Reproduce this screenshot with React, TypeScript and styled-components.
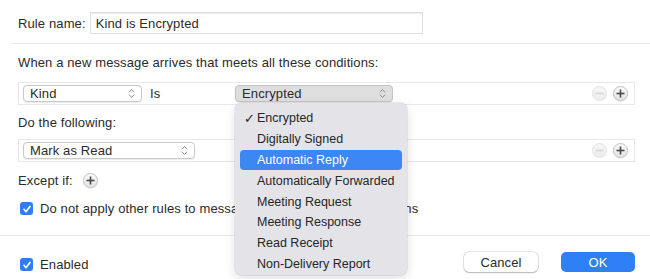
import React from "react";
import styled, { createGlobalStyle, css } from "styled-components";

const Global = createGlobalStyle`
  html, body { margin: 0; padding: 0; background: #ffffff; }
  body {
    font-family: "Liberation Sans", Arial, Helvetica, sans-serif;
    font-size: 13px;
    letter-spacing: 0.12px;
    color: #2b2b2b;
    width: 650px;
    height: 279px;
    overflow: hidden;
  }
`;

const Page = styled.div`
  position: relative;
  width: 650px;
  height: 279px;
  display: flex;
  flex-direction: column;
`;

const NameRow = styled.div`
  display: flex;
  align-items: center;
  gap: 4px;
  padding: 12px 0 0 18px;
`;

const Label = styled.span`
  line-height: 15px;
  white-space: nowrap;
`;

const TextField = styled.div`
  box-sizing: border-box;
  width: 333px;
  height: 22px;
  border: 1px solid #dedede;
  box-shadow: inset 0 1px 0 #ececec;
  display: flex;
  align-items: center;
  padding-left: 5px;
`;

const Divider = styled.div<{ $inset?: number; $top: number }>`
  height: 1px;
  background: #e9e9e9;
  margin-left: ${(p) => p.$inset ?? 0}px;
  margin-top: ${(p) => p.$top}px;
`;

const SectionLabel = styled.div<{ $top: number }>`
  line-height: 15px;
  padding-left: 18px;
  margin-top: ${(p) => p.$top}px;
`;

const RuleBox = styled.div<{ $top: number }>`
  box-sizing: border-box;
  height: 23px;
  margin: ${(p) => p.$top}px 15px 0 18px;
  border: 1px solid #e8e8e8;
  display: flex;
  align-items: center;
  padding: 0 6px 0 4px;
`;

const PopupWrap = styled.div`
  position: relative;
`;

const Popup = styled.div<{ $width: number; $pressed?: boolean }>`
  box-sizing: border-box;
  width: ${(p) => p.$width}px;
  height: 17px;
  border: 1px solid #c9c9c9;
  border-radius: 4px;
  background: #ffffff;
  display: flex;
  align-items: center;
  justify-content: space-between;
  padding: 0 6px 0 6px;
  line-height: 15px;
  box-shadow: 0 0.5px 1px rgba(0, 0, 0, 0.08);
  ${(p) =>
    p.$pressed &&
    css`
      background: #dedede;
      border-color: #c4c4c4;
    `}
`;

const Chevrons = () => (
  <svg width="7" height="11" viewBox="0 0 7 11" fill="none">
    <path d="M1.2 4 L3.5 1.5 L5.8 4" stroke="#8f8f8f" strokeWidth="1" strokeLinecap="round" strokeLinejoin="round" />
    <path d="M1.2 7 L3.5 9.5 L5.8 7" stroke="#8f8f8f" strokeWidth="1" strokeLinecap="round" strokeLinejoin="round" />
  </svg>
);

const OpLabel = styled.span`
  width: 93px;
  padding-left: 8px;
  box-sizing: border-box;
  line-height: 15px;
`;

const RoundButtons = styled.div`
  margin-left: auto;
  display: flex;
  gap: 6px;
  align-items: center;
`;

const RoundBtn = styled.div<{ $disabled?: boolean }>`
  width: 15px;
  height: 15px;
  border-radius: 50%;
  box-sizing: border-box;
  display: flex;
  align-items: center;
  justify-content: center;
  background: ${(p) =>
    p.$disabled
      ? "linear-gradient(#f7f7f7, #ececec)"
      : "linear-gradient(#fafafa, #e4e4e4)"};
  border: 1px solid ${(p) => (p.$disabled ? "#e2e2e2" : "#c2c2c2")};
  box-shadow: ${(p) => (p.$disabled ? "none" : "0 0.5px 1px rgba(0,0,0,0.15)")};
`;

const Glyph = ({ plus, color }: { plus?: boolean; color: string }) => (
  <svg width="9" height="9" viewBox="0 0 9 9">
    <rect x="0.5" y="3.7" width="8" height="1.6" fill={color} />
    {plus && <rect x="3.7" y="0.5" width="1.6" height="8" fill={color} />}
  </svg>
);

const ExceptRow = styled.div`
  display: flex;
  align-items: center;
  gap: 10px;
  padding-left: 18px;
  margin-top: 11px;
  height: 15px;
`;

const CheckRow = styled.div<{ $top: number }>`
  display: flex;
  align-items: center;
  gap: 7px;
  padding-left: 20px;
  margin-top: ${(p) => p.$top}px;
  height: 15px;
`;

const CheckBoxBox = styled.div`
  width: 13px;
  height: 13px;
  border-radius: 3px;
  background: #2f7cf6;
  display: flex;
  align-items: center;
  justify-content: center;
`;

const Checkbox = () => (
  <CheckBoxBox>
    <svg width="10" height="10" viewBox="0 0 10 10" fill="none">
      <path d="M2 5.3 L4.1 7.6 L8 2.4" stroke="#fff" strokeWidth="1.7" strokeLinecap="round" strokeLinejoin="round" />
    </svg>
  </CheckBoxBox>
);

const Footer = styled.div`
  display: flex;
  align-items: flex-end;
  padding: 0 15px 0 0;
  margin-top: 16px;
`;

const Buttons = styled.div`
  margin-left: auto;
  display: flex;
  gap: 23px;
`;

const Button = styled.div<{ $primary?: boolean }>`
  box-sizing: border-box;
  width: 74px;
  height: 20px;
  border-radius: 5px;
  display: flex;
  align-items: center;
  justify-content: center;
  font-size: 13px;
  ${(p) =>
    p.$primary
      ? css`
          background: #2f80f7;
          color: #ffffff;
        `
      : css`
          background: #ffffff;
          color: #2b2b2b;
          box-shadow: 0 0 0 0.5px rgba(0, 0, 0, 0.2), 0 1px 1.5px rgba(0, 0, 0, 0.2);
        `}
`;

const Menu = styled.div`
  position: absolute;
  left: 0;
  top: 18px;
  width: 172px;
  box-sizing: border-box;
  padding: 5px 5px 1px;
  background: #e3e3e8;
  border-radius: 6px;
  font-size: 12.5px;
  letter-spacing: 0;
  box-shadow: 0 0 0 0.5px rgba(0, 0, 0, 0.12), 0 4px 12px rgba(0, 0, 0, 0.12);
  z-index: 10;
`;

const MenuItem = styled.div<{ $active?: boolean }>`
  height: 20.8px;
  display: flex;
  align-items: center;
  border-radius: 4px;
  padding-left: 4px;
  color: ${(p) => (p.$active ? "#ffffff" : "#262626")};
  background: ${(p) => (p.$active ? "#3c87f4" : "transparent")};
`;

const Check = styled.span`
  width: 13px;
  display: inline-block;
`;

const items = [
  "Encrypted",
  "Digitally Signed",
  "Automatic Reply",
  "Automatically Forwarded",
  "Meeting Request",
  "Meeting Response",
  "Read Receipt",
  "Non-Delivery Report",
];

const RowControls = () => (
  <RoundButtons>
    <RoundBtn $disabled>
      <Glyph color="#d6d6d6" />
    </RoundBtn>
    <RoundBtn>
      <Glyph plus color="#4a4a4a" />
    </RoundBtn>
  </RoundButtons>
);

export default function App() {
  return (
    <>
      <Global />
      <Page>
        <NameRow>
          <Label>Rule name:</Label>
          <TextField>Kind is Encrypted</TextField>
        </NameRow>
        <Divider $inset={10} $top={9} />
        <SectionLabel $top={11}>When a new message arrives that meets all these conditions:</SectionLabel>
        <RuleBox $top={12}>
          <Popup $width={119}>
            <span>Kind</span>
            <Chevrons />
          </Popup>
          <OpLabel>Is</OpLabel>
          <PopupWrap>
            <Popup $width={158} $pressed>
              <span>Encrypted</span>
              <Chevrons />
            </Popup>
            <Menu>
              {items.map((it, i) => (
                <MenuItem key={it} $active={i === 2}>
                  <Check>{i === 0 ? "✓" : ""}</Check>
                  {it}
                </MenuItem>
              ))}
            </Menu>
          </PopupWrap>
          <RowControls />
        </RuleBox>
        <SectionLabel $top={10}>Do the following:</SectionLabel>
        <RuleBox $top={9}>
          <Popup $width={172}>
            <span>Mark as Read</span>
            <Chevrons />
          </Popup>
          <RowControls />
        </RuleBox>
        <ExceptRow>
          <Label>Except if:</Label>
          <RoundBtn>
            <Glyph plus color="#4a4a4a" />
          </RoundBtn>
        </ExceptRow>
        <CheckRow $top={13}>
          <Checkbox />
          <Label>Do not apply other rules to messages that meet these conditions</Label>
        </CheckRow>
        <Divider $top={19} />
        <Footer>
          <CheckRow $top={0}>
            <Checkbox />
            <Label>Enabled</Label>
          </CheckRow>
          <Buttons>
            <Button>Cancel</Button>
            <Button $primary>OK</Button>
          </Buttons>
        </Footer>
      </Page>
    </>
  );
}
